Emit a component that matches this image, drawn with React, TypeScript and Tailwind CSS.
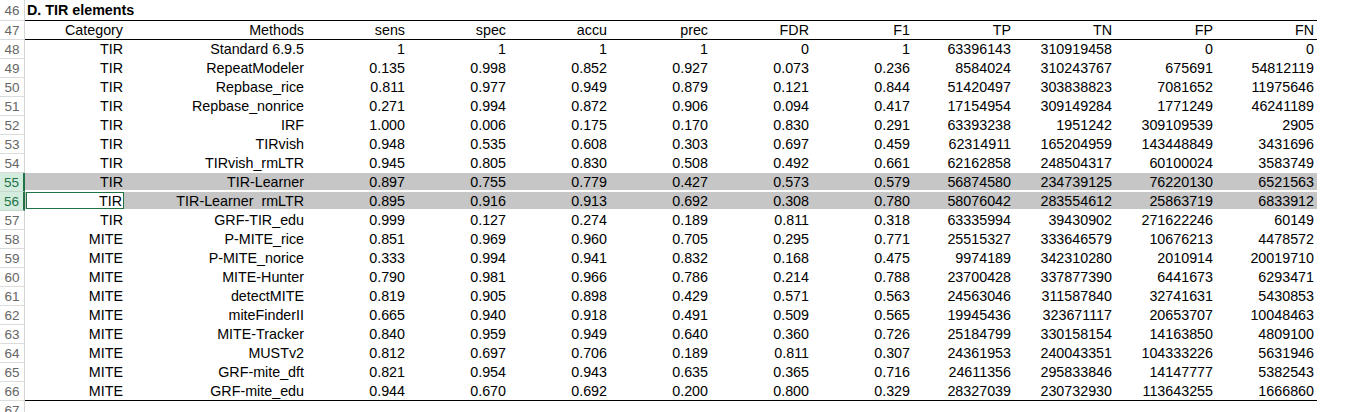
import React from "react";

const HEAD = ["Category", "Methods", "sens", "spec", "accu", "prec", "FDR", "F1", "TP", "TN", "FP", "FN"];

const ROWS: string[][] = [
  ["TIR", "Standard 6.9.5", "1", "1", "1", "1", "0", "1", "63396143", "310919458", "0", "0"],
  ["TIR", "RepeatModeler", "0.135", "0.998", "0.852", "0.927", "0.073", "0.236", "8584024", "310243767", "675691", "54812119"],
  ["TIR", "Repbase_rice", "0.811", "0.977", "0.949", "0.879", "0.121", "0.844", "51420497", "303838823", "7081652", "11975646"],
  ["TIR", "Repbase_nonrice", "0.271", "0.994", "0.872", "0.906", "0.094", "0.417", "17154954", "309149284", "1771249", "46241189"],
  ["TIR", "IRF", "1.000", "0.006", "0.175", "0.170", "0.830", "0.291", "63393238", "1951242", "309109539", "2905"],
  ["TIR", "TIRvish", "0.948", "0.535", "0.608", "0.303", "0.697", "0.459", "62314911", "165204959", "143448849", "3431696"],
  ["TIR", "TIRvish_rmLTR", "0.945", "0.805", "0.830", "0.508", "0.492", "0.661", "62162858", "248504317", "60100024", "3583749"],
  ["TIR", "TIR-Learner", "0.897", "0.755", "0.779", "0.427", "0.573", "0.579", "56874580", "234739125", "76220130", "6521563"],
  ["TIR", "TIR-Learner_rmLTR", "0.895", "0.916", "0.913", "0.692", "0.308", "0.780", "58076042", "283554612", "25863719", "6833912"],
  ["TIR", "GRF-TIR_edu", "0.999", "0.127", "0.274", "0.189", "0.811", "0.318", "63335994", "39430902", "271622246", "60149"],
  ["MITE", "P-MITE_rice", "0.851", "0.969", "0.960", "0.705", "0.295", "0.771", "25515327", "333646579", "10676213", "4478572"],
  ["MITE", "P-MITE_norice", "0.333", "0.994", "0.941", "0.832", "0.168", "0.475", "9974189", "342310280", "2010914", "20019710"],
  ["MITE", "MITE-Hunter", "0.790", "0.981", "0.966", "0.786", "0.214", "0.788", "23700428", "337877390", "6441673", "6293471"],
  ["MITE", "detectMITE", "0.819", "0.905", "0.898", "0.429", "0.571", "0.563", "24563046", "311587840", "32741631", "5430853"],
  ["MITE", "miteFinderII", "0.665", "0.940", "0.918", "0.491", "0.509", "0.565", "19945436", "323671117", "20653707", "10048463"],
  ["MITE", "MITE-Tracker", "0.840", "0.959", "0.949", "0.640", "0.360", "0.726", "25184799", "330158154", "14163850", "4809100"],
  ["MITE", "MUSTv2", "0.812", "0.697", "0.706", "0.189", "0.811", "0.307", "24361953", "240043351", "104333226", "5631946"],
  ["MITE", "GRF-mite_dft", "0.821", "0.954", "0.943", "0.635", "0.365", "0.716", "24611356", "295833846", "14147777", "5382543"],
  ["MITE", "GRF-mite_edu", "0.944", "0.670", "0.692", "0.200", "0.800", "0.329", "28327039", "230732930", "113643255", "1666860"],
];

// column widths: A, B, then ten numeric columns
const W = ["w-[101px]", "w-[181px]", "w-[101px]", "w-[101px]", "w-[101px]", "w-[101px]", "w-[101px]", "w-[101px]", "w-[101px]", "w-[101px]", "w-[101px]", "w-[101px]"];

function RowNum({ n, sel, h }: { n: number; sel?: boolean; h: string }) {
  return (
    <div
      className={`${h} w-[25px] shrink-0 border-b text-center text-[13.5px] leading-[19px] ${
        sel
          ? "border-r-2 border-r-[#217346] border-b-[#c8d8cc] bg-[#d3ecdd] text-[#217346]"
          : "border-r border-r-[#d4d4d4] border-b-[#dcdcdc] text-[#666666]"
      }`}
    >
      {n}
    </div>
  );
}

export default function App() {
  return (
    <div className="h-[412px] w-[1355px] overflow-hidden bg-white font-['Liberation_Sans',Arial,sans-serif] text-[14.3px] text-black">
      {/* row 46: title */}
      <div className="flex">
        <RowNum n={46} h="h-[21px] pt-px" />
        <div className="h-[21px] w-[1292px] border-b border-black pl-[2px] pt-px font-bold leading-[19px]">
          D. TIR elements
        </div>
      </div>
      {/* row 47: header */}
      <div className="flex">
        <RowNum n={47} h="h-[19px]" />
        <div className="flex h-[19px] border-b border-black">
          {HEAD.map((c, i) => (
            <div key={c} className={`${W[i]} shrink-0 pr-[3px] text-right leading-[18px]`}>
              {c}
            </div>
          ))}
        </div>
      </div>
      {ROWS.map((r, ri) => {
        const n = 48 + ri;
        const sel = n === 55 || n === 56;
        const last = n === 66;
        return (
          <div key={n} className="flex">
            <RowNum n={n} sel={sel} h="h-[19px]" />
            <div
              className={`flex h-[19px] ${
                sel ? "items-start border-b-2 border-white bg-[#c6c6c6]" : last ? "border-b border-black" : ""
              }`}
            >
              {r.map((c, i) =>
                n === 56 && i === 0 ? (
                  <div
                    key={i}
                    className="ml-px mr-[2px] h-[17px] w-[98px] shrink-0 border border-[#217346] bg-white pr-px text-right leading-[17px]"
                  >
                    {c}
                  </div>
                ) : (
                  <div
                    key={i}
                    className={`${W[i]} shrink-0 overflow-hidden whitespace-nowrap pr-[3px] text-right leading-[19px] ${
                      sel ? "h-[16px]" : ""
                    }`}
                  >
                    {c}
                  </div>
                )
              )}
            </div>
          </div>
        );
      })}
      <div className="flex">
        <RowNum n={67} h="h-[19px]" />
      </div>
    </div>
  );
}
